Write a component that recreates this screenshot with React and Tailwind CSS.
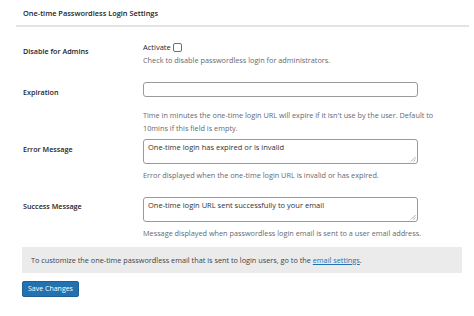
import { useState } from "react";

const FONT = { fontFamily: '"Open Sans", "Noto Sans", sans-serif' };

function Row({ label, labelClass = "", children }) {
  return (
    <div className="flex">
      <div className={`w-[143px] shrink-0 pl-[23px] text-[7.2px] font-semibold text-[#1d2327] ${labelClass}`}>
        {label}
      </div>
      <div className="flex flex-col">{children}</div>
    </div>
  );
}

function Help({ children, className = "" }) {
  return (
    <p className={`text-[7.3px] leading-[13px] text-[#646970] ${className}`}>
      {children}
    </p>
  );
}

function MessageBox({ defaultValue }) {
  return (
    <div className="relative h-[25px] w-[275px] rounded-[3px] border border-[#9a9a9a] bg-white">
      <textarea
        defaultValue={defaultValue}
        className="h-full w-full resize-none bg-transparent px-[4px] pt-[2px] text-[7.5px] leading-[10px] text-[#2c3338] outline-none"
        style={FONT}
      />
      {/* resize grip */}
      <svg className="absolute bottom-[1px] right-[1px]" width="6" height="6" viewBox="0 0 6 6">
        <path d="M5.5 1 L1 5.5 M5.5 3.5 L3.5 5.5" stroke="#9a9a9a" strokeWidth="0.8" />
      </svg>
    </div>
  );
}

export default function App() {
  const [disabled, setDisabled] = useState(false);

  return (
    <div className="h-[316px] w-[474px] overflow-hidden bg-white" style={FONT}>
      <div className="ml-[16px] mr-[5px] border-b-2 border-[#e4e4e6] pb-[6px] pl-[7px] pt-[8px]">
        <h2 className="text-[7.4px] font-semibold leading-[11px] text-[#1d2327]">
          One-time Passwordless Login Settings
        </h2>
      </div>

      <div className="mt-[14px] flex flex-col">
        <Row label="Disable for Admins" labelClass="pt-[5px]">
          <label className="flex items-center gap-[2px] text-[7.5px] leading-[12px] text-[#1d2327]">
            Activate
            <input
              type="checkbox"
              checked={disabled}
              onChange={(e) => setDisabled(e.target.checked)}
              className="h-[9px] w-[9px] appearance-none rounded-[2px] border border-[#6f6f6f] bg-white checked:bg-[#2271b1]"
            />
          </label>
          <Help className="mt-[1px]">Check to disable passwordless login for administrators.</Help>
        </Row>

        <Row label="Expiration" labelClass="pt-[20px]">
          <input
            type="text"
            className="mt-[15px] h-[15px] w-[275px] rounded-[3px] border border-[#9a9a9a] bg-white px-[4px] text-[7.5px] outline-none"
          />
          <Help className="mt-[12px] w-[300px]">
            Time in minutes the one-time login URL will expire if it isn't use by the user. Default to
            10mins if this field is empty.
          </Help>
        </Row>

        <Row label="Error Message" labelClass="pt-[9px]">
          <div className="mt-[4px]">
            <MessageBox defaultValue="One-time login has expired or is invalid" />
          </div>
          <Help className="mt-[5px]">Error displayed when the one-time login URL is invalid or has expired.</Help>
        </Row>

        <Row label="Success Message" labelClass="pt-[19px]">
          <div className="mt-[15px]">
            <MessageBox defaultValue="One-time login URL sent successfully to your email" />
          </div>
          <Help className="mt-[5px]">
            Message displayed when passwordless login email is sent to a user email address.
          </Help>
        </Row>
      </div>

      <div className="ml-[22px] mr-[12px] mt-[7px] flex h-[26px] items-center bg-[#ebebeb] pl-[9px] text-[7.3px] text-[#3c434a]">
        <p>
          To customize the one-time passwordless email that is sent to login users, go to the{" "}
          <a href="#" className="text-[#2271b1] underline">email settings</a>.
        </p>
      </div>

      <div className="ml-[22px] mt-[8px] flex">
        <button className="h-[16px] w-[57px] rounded-[2px] border border-[#1e5f95] bg-[#2271b1] text-[7px] leading-[14px] text-white">
          Save Changes
        </button>
      </div>
    </div>
  );
}
